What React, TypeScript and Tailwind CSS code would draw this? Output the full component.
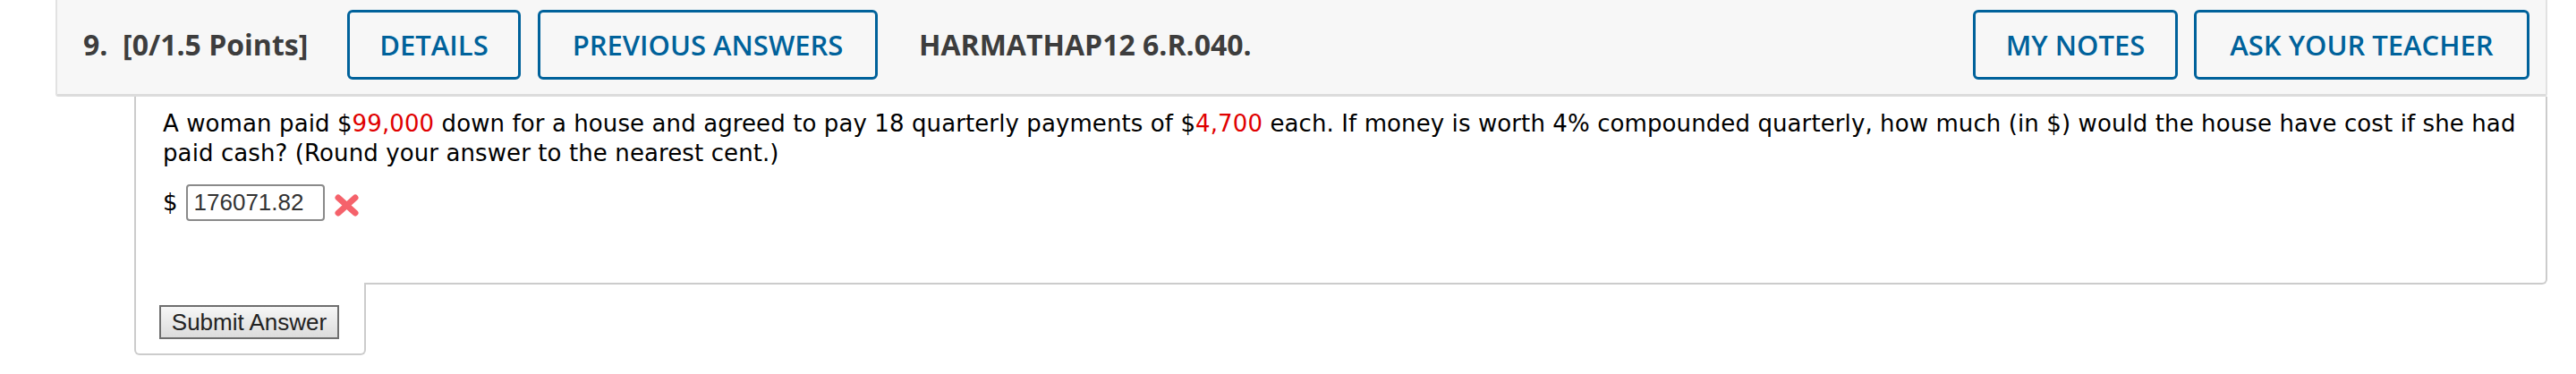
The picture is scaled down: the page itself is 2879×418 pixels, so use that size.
import { useState } from "react";

const headerFont = { fontFamily: '"Open Sans", "Liberation Sans", sans-serif' };

const OutlineButton = ({ label, width }: { label: string; width: string }) => (
  <button
    className={`${width} h-[78px] flex items-center justify-center border-[3px] border-[#00629b] rounded-[6px] bg-transparent text-[#00629b] text-[31px] font-semibold leading-none whitespace-nowrap`}
  >
    {label}
  </button>
);

const WrongMark = () => (
  <svg width="29" height="27" viewBox="0 0 29 27" className="shrink-0">
    <g stroke="#f4525b" strokeWidth="7" strokeLinecap="round" opacity="0.9">
      <line x1="5" y1="5" x2="24" y2="22" />
      <line x1="24" y1="5" x2="5" y2="22" />
    </g>
  </svg>
);

export default function App() {
  const [answer, setAnswer] = useState("176071.82");

  return (
    <div className="w-[2879px] h-[418px] bg-white overflow-hidden">
      {/* question header */}
      <div
        className="ml-[62px] w-[2785px] h-[108px] pt-[11px] pl-[29px] pr-[18px] bg-[#f7f7f7] border-x-2 border-x-[#e2e2e2] border-b-[3px] border-b-[#dcdcdc] rounded-b-[3px] flex items-start"
        style={headerFont}
      >
        <div className="h-[78px] flex items-center flex-1">
          <span className="w-[295px] text-[32px] font-bold text-[#3d3d3d] whitespace-nowrap">
            9.&nbsp; [0/1.5 Points]
          </span>
          <OutlineButton label="DETAILS" width="w-[194px]" />
          <span className="w-[19px]" />
          <OutlineButton label="PREVIOUS ANSWERS" width="w-[380px]" />
          <span className="ml-[46px] text-[32px] font-bold text-[#3d3d3d] whitespace-nowrap">
            HARMATHAP12 6.R.040.
          </span>
        </div>
        <div className="h-[78px] flex items-center gap-[18px]">
          <OutlineButton label="MY NOTES" width="w-[229px]" />
          <OutlineButton label="ASK YOUR TEACHER" width="w-[375px]" />
        </div>
      </div>

      {/* question body */}
      <div className="ml-[150px] w-[2697px] h-[210px] pt-[14px] pl-[30px] pr-[20px] border-x-2 border-b-2 border-[#cccccc] rounded-br-[6px]">
        <p
          className="text-[26px] leading-[33px] tracking-[0.1px] text-black"
          style={{ fontFamily: '"DejaVu Sans", Verdana, sans-serif' }}
        >
          A woman paid $<span className="text-[#e00000]">99,000</span> down for a house and agreed
          to pay 18 quarterly payments of $<span className="text-[#e00000]">4,700</span> each. If
          money is worth 4% compounded quarterly, how much (in $) would the house have cost if she
          had paid cash? (Round your answer to the nearest cent.)
        </p>
        <div className="mt-[18px] flex items-center">
          <span
            className="text-[26px] text-black mr-[9px]"
            style={{ fontFamily: '"DejaVu Sans", Verdana, sans-serif' }}
          >
            $
          </span>
          <input
            value={answer}
            onChange={(e) => setAnswer(e.target.value)}
            className="w-[155px] h-[41px] pl-[7px] border-2 border-[#8a8a8a] rounded-[4px] text-[26px] text-[#333] outline-none"
            style={{ fontFamily: '"Liberation Sans", Arial, sans-serif' }}
          />
          <span className="ml-[10px] mt-[6px]">
            <WrongMark />
          </span>
        </div>
      </div>

      {/* submit tab */}
      <div className="ml-[150px] -mt-[2px] w-[259px] h-[81px] pt-[25px] pl-[26px] bg-white border-x-2 border-b-2 border-[#cccccc] rounded-b-[6px]">
        <button
          className="h-[38px] w-[201px] border-2 border-[#6e6e6e] bg-gradient-to-b from-[#f6f6f6] to-[#dcdcdc] text-[26px] leading-none text-[#222]"
          style={{ fontFamily: '"Liberation Sans", Arial, sans-serif' }}
        >
          Submit Answer
        </button>
      </div>
    </div>
  );
}
